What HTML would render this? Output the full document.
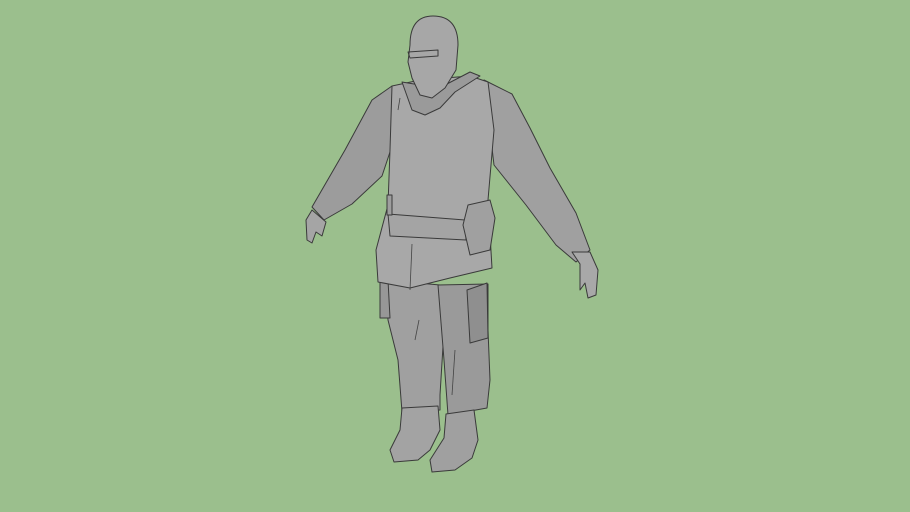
<!DOCTYPE html>
<html><head><style>html,body{margin:0;padding:0;background:#9bbf8d;width:910px;height:512px;overflow:hidden}</style></head>
<body>
<svg width="910" height="512" viewBox="0 0 910 512" xmlns="http://www.w3.org/2000/svg">
<rect width="910" height="512" fill="#9bbf8d"/>
<g stroke="#3a3a3a" stroke-width="1" stroke-linejoin="round" fill="#a2a2a2">
<!-- left arm -->
<path d="M392 86 L372 100 L345 150 L312 207 L324 220 L352 204 L382 176 L394 140 Z" fill="#9c9c9c"/>
<path d="M312 210 L306 220 L307 240 L312 243 L316 232 L322 236 L326 222 Z" fill="#a5a5a5"/>
<!-- right arm -->
<path d="M484 80 L512 94 L530 128 L550 168 L576 213 L590 250 L576 262 L556 245 L526 205 L494 165 Z" fill="#a0a0a0"/>
<path d="M572 252 L580 264 L580 290 L585 283 L588 298 L596 295 L598 270 L590 252 Z" fill="#a8a8a8"/>
<!-- legs -->
<path d="M385 280 L440 285 L444 330 L440 395 L440 410 L402 412 L398 360 L388 320 Z" fill="#a0a0a0"/>
<path d="M438 285 L488 284 L488 330 L490 380 L487 408 L448 415 L444 360 Z" fill="#9a9a9a"/>
<path d="M467 290 L487 283 L488 338 L470 343 Z" fill="#8f8f8f"/>
<path d="M380 282 L388 280 L390 318 L380 318 Z" fill="#979797"/>
<!-- torso -->
<path d="M392 86 L420 80 L470 76 L488 82 L494 130 L488 200 L492 268 L450 278 L410 288 L378 282 L376 250 L388 205 L390 150 Z" fill="#a8a8a8"/>
<!-- belt -->
<path d="M388 214 L465 220 L466 240 L390 236 Z" fill="#a4a4a4"/>
<!-- pouch -->
<path d="M468 205 L490 200 L495 218 L490 250 L470 255 L463 225 Z" fill="#a0a0a0"/>
<path d="M387 195 L392 195 L392 215 L387 215 Z" fill="#9e9e9e"/>
<!-- collar -->
<path d="M402 82 L412 110 L425 115 L440 108 L455 92 L480 76 L470 72 L445 85 L420 85 Z" fill="#9a9a9a"/>
<!-- head -->
<path d="M410 45 Q410 16 433 16 Q458 16 458 45 L456 70 L445 88 L432 98 L420 95 L412 78 L408 62 Z" fill="#a7a7a7"/>
<path d="M408 52 L438 50 L438 56 L410 58 Z" fill="none"/>
<!-- boots -->
<path d="M402 408 L438 406 L440 430 L430 450 L418 460 L394 462 L390 450 L400 430 Z" fill="#a3a3a3"/>
<path d="M446 414 L474 410 L478 440 L472 458 L455 470 L432 472 L430 460 L444 438 Z" fill="#a0a0a0"/>
</g>
<g stroke="#444" stroke-width="0.8" fill="none">
<path d="M412 244 L410 290"/>
<path d="M398 110 L400 98"/>
<path d="M419 320 L415 340"/>
<path d="M455 350 L452 395"/>
</g>
</svg>
</body></html>
